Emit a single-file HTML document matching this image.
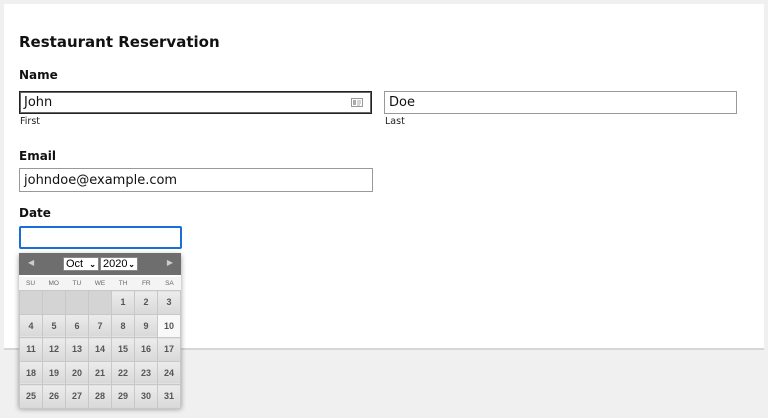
<!DOCTYPE html>
<html><head><style>
body{margin:0;background:#f0f0f0;font-family:"DejaVu Sans","Liberation Sans",sans-serif;width:768px;height:418px;overflow:hidden;position:relative}
.panel{position:absolute;left:4px;top:4px;width:760px;height:344px;background:#fff;box-shadow:0 2px 0 #d6d6d6}
.a{position:absolute}
h1{position:absolute;left:19px;top:33px;margin:0;font-size:15px;font-weight:bold;color:#111}
.lbl{font-size:12px;font-weight:bold;color:#111}
.inp{position:absolute;box-sizing:border-box;border:1px solid #999;background:#fff;font-size:13px;padding-left:4px;color:#111}
.sm{font-size:9.5px;color:#222}
.cal{position:absolute;left:19px;top:253px;width:162px;height:154px;box-shadow:0 2px 5px rgba(0,0,0,.4);background:#ddd;font-family:"Liberation Sans",sans-serif}
.hd{height:22px;background:#6e6e6e;position:relative}
.dn{position:absolute;top:22px;left:0;width:162px;height:14px;background:#f4f4f4;display:flex;border-top:2px solid #fff}
.dn span{flex:1;text-align:center;font-size:6.5px;color:#666;line-height:13px}
table{position:absolute;top:37px;left:0;border-collapse:collapse;width:162px}
td{width:23px;height:22.5px;padding:0;border:1px solid #c8c8c8;text-align:center;font-size:9px;font-weight:bold;color:#555;background:linear-gradient(#ececec,#d8d8d8)}
td.e{background:#d4d4d4}
td.w{background:#f8f8f8}
.sel{position:absolute;top:4px;height:14px;box-sizing:border-box;font-size:11px;line-height:13px;border:1px solid #888;background:#fff;padding-left:2px;color:#000}
.sel b{position:absolute;right:2px;top:0;font-size:8px}
</style></head><body>
<div class="panel"></div>
<h1>Restaurant Reservation</h1>
<div class="a lbl" style="left:19px;top:68px">Name</div>
<div class="inp" style="left:19px;top:91px;width:353px;height:23px;border:1px solid #222;box-shadow:inset 0 0 0 1px #666;line-height:22px">John
<svg style="position:absolute;right:8px;top:6px" width="12" height="9" viewBox="0 0 12 9"><rect x=".5" y=".5" width="11" height="8" fill="none" stroke="#999"/><rect x="2" y="2" width="3" height="5" fill="#aaa"/><path d="M6 3h4M6 5h4M6 7h3" stroke="#aaa"/></svg></div>
<div class="a sm" style="left:20px;top:116px">First</div>
<div class="inp" style="left:384px;top:91px;width:353px;height:23px;line-height:21px">Doe</div>
<div class="a sm" style="left:385px;top:116px">Last</div>
<div class="a lbl" style="left:19px;top:149px">Email</div>
<div class="inp" style="left:19px;top:168px;width:354px;height:24px;line-height:23px">johndoe@example.com</div>
<div class="a lbl" style="left:19px;top:206px">Date</div>
<div class="inp" style="left:19px;top:226px;width:163px;height:23px;border:2px solid #1a6fd6;border-radius:2px"></div>
<div class="cal">
<div class="hd"><span style="position:absolute;left:9px;top:5px;color:#ccc;font-size:8px">◀</span><span style="position:absolute;right:8px;top:5px;color:#ccc;font-size:8px">▶</span>
<div class="sel" style="left:44px;width:36px">Oct<b>⌄</b></div><div class="sel" style="left:81px;width:38px">2020<b>⌄</b></div>
<div style="position:absolute;left:0;top:22px;width:74px;height:2px;background:#6ab0e0"></div></div>
<div class="dn"><span>SU</span><span>MO</span><span>TU</span><span>WE</span><span>TH</span><span>FR</span><span>SA</span></div>
<table>
<tr><td class="e"></td><td class="e"></td><td class="e"></td><td class="e"></td><td>1</td><td>2</td><td>3</td></tr>
<tr><td>4</td><td>5</td><td>6</td><td>7</td><td>8</td><td>9</td><td class="w">10</td></tr>
<tr><td>11</td><td>12</td><td>13</td><td>14</td><td>15</td><td>16</td><td>17</td></tr>
<tr><td>18</td><td>19</td><td>20</td><td>21</td><td>22</td><td>23</td><td>24</td></tr>
<tr><td>25</td><td>26</td><td>27</td><td>28</td><td>29</td><td>30</td><td>31</td></tr>
</table></div>
</body></html>
